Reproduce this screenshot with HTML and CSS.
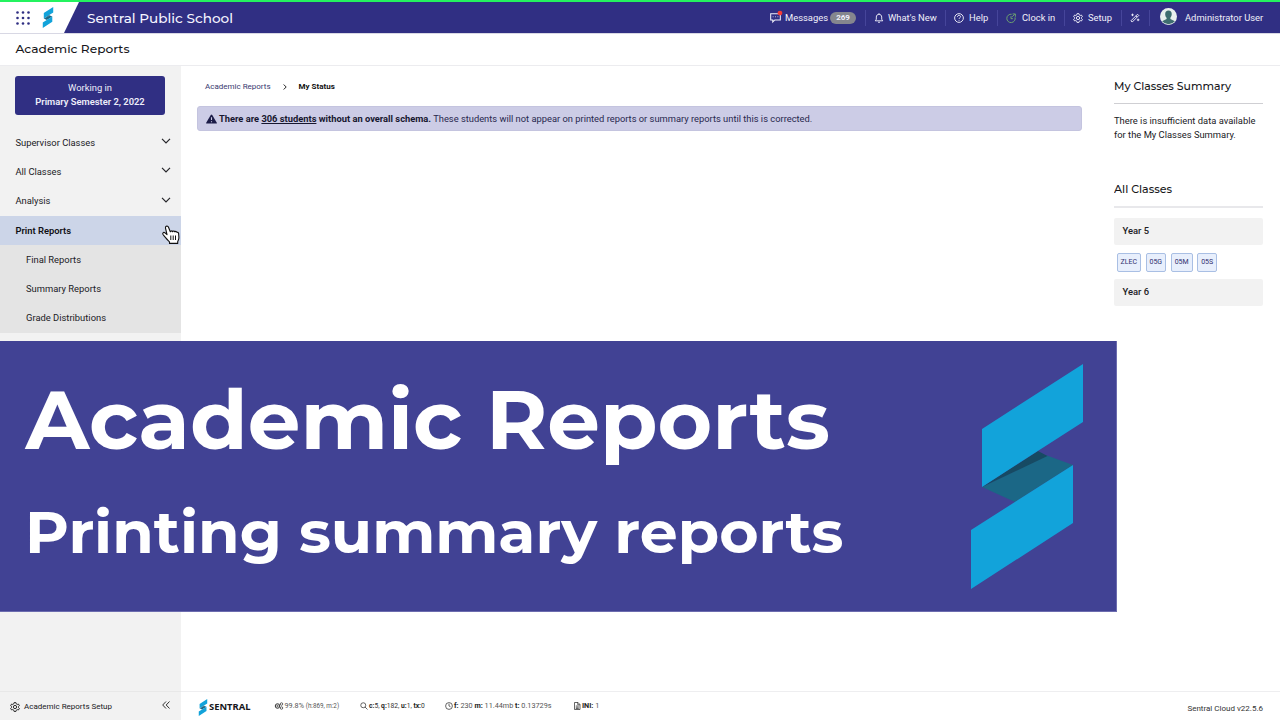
FILE: index.html
```html
<!DOCTYPE html>
<html lang="en">
<head>
<meta charset="utf-8">
<title>Academic Reports</title>
<link rel="stylesheet" href="styles.css">
</head>
<body>
<svg class="defs" width="0" height="0">
  <symbol id="logo" viewBox="0 0 112 225">
    <path fill="#1b6786" d="M11 123 76 91.500 102 101 44 138z"/>
    <path fill="#174a63" d="M11 123 67 87 76.500 92z"/>
    <path fill="#12a3da" d="M11 65 112 0V58L11 123zM0 166 102 101V159L0 225z"/>
  </symbol>
  <symbol id="gear" viewBox="0 0 16 16">
    <path d="M6.500 1h3l.5 2 1.500.9 2-.6L15 5.900l-1.500 1.400v1.500l1.500 1.400-1.500 2.600-2-.6-1.500.9-.5 2h-3L6 13l-1.500-.9-2 .6L1 10.100l1.500-1.400V7.200L1 5.900l1.500-2.600 2 .6L6 3z"/><circle cx="8" cy="8" r="2.600"/>
  </symbol>
  <symbol id="down" viewBox="0 0 10 6"><path d="M1 .8 5 4.800 9 .8"/></symbol>
</svg>
<div class="app">
  <header class="topbar">
    <div class="brand">
      <svg class="dots" viewBox="0 0 14 14"><g><circle cx="1.500" cy="1.500" r="1.300"/><circle cx="7" cy="1.500" r="1.300"/><circle cx="12.500" cy="1.500" r="1.300"/><circle cx="1.500" cy="7" r="1.300"/><circle cx="7" cy="7" r="1.300"/><circle cx="12.500" cy="7" r="1.300"/><circle cx="1.500" cy="12.500" r="1.300"/><circle cx="7" cy="12.500" r="1.300"/><circle cx="12.500" cy="12.500" r="1.300"/></g></svg>
      <svg class="brand-logo"><use href="#logo"/></svg>
    </div>
    <svg class="school" width="160" height="30"><text x="0" y="20.500" textLength="146" lengthAdjust="spacingAndGlyphs">Sentral Public School</text></svg>
    <nav class="topnav">
      <a class="messages"><svg class="ic" viewBox="0 0 16 16"><path d="M1 2.500h14v9H7l-3 3v-3H1zM4 7h1M7.500 7h1M11 7h1"/><circle class="red" cx="14.500" cy="1.500" r="3.500"/></svg><span>Messages</span><b>269</b></a>
      <a class="news"><svg class="ic" viewBox="0 0 16 16"><path d="M2 12.500h12L12.300 10V6.500C12.300 4 10.500 2 8 2S3.700 4 3.700 6.500V10zM6.500 14.800h3M8 .5V2"/></svg><span>What's New</span></a>
      <a class="help"><svg class="ic" viewBox="0 0 16 16"><circle cx="8" cy="8" r="7"/><path d="M5.500 6.200C5.500 3 10.500 3 10.500 6c0 1.500-2.500 2-2.500 3.500M8 11.300v1.200"/></svg><span>Help</span></a>
      <a class="clock"><svg class="ic green" viewBox="0 0 16 16"><path d="M14.500 7A6.700 6.700 0 1 1 9 2M8 5v4h3M10 6l4-4M10.500 1.500H15V6"/></svg><span>Clock in</span></a>
      <a class="setup"><svg class="ic"><use href="#gear"/></svg><span>Setup</span></a>
      <a class="wand"><svg class="ic" viewBox="0 0 16 16"><path d="M1.500 12.500 12 2l2 2L3.500 14.500zM9.500 4.500l2 2M4 1v4M2 3h4M13 9v4M11 11h4"/></svg></a>
      <a class="user"><svg class="avatar" viewBox="0 0 17 17"><circle cx="8.500" cy="8.500" r="8.500" fill="#e9f0ee"/><path fill="#3e6d70" d="M8.500 2.500c2.300 0 3.400 1.600 3.200 4-.1 1.500-.6 2.400-1.300 3.300v1.200l4.500 2.300a8.500 8.500 0 0 1-12.800 0L6.600 11V9.800C5.800 9 5.300 8 5.200 6.500 5 4.100 6.200 2.500 8.500 2.500z"/></svg><span>Administrator User</span></a>
    </nav>
  </header>
  <div class="titlebar"><svg width="140" height="30"><text x="0.500" y="19" textLength="114" lengthAdjust="spacingAndGlyphs">Academic Reports</text></svg></div>
  <div class="body">
    <aside class="side">
      <button class="working">Working in<strong>Primary Semester 2, 2022</strong></button>
      <a class="item"><span>Supervisor Classes</span><svg class="chev"><use href="#down"/></svg></a>
      <a class="item"><span>All Classes</span><svg class="chev"><use href="#down"/></svg></a>
      <a class="item"><span>Analysis</span><svg class="chev"><use href="#down"/></svg></a>
      <a class="item active"><span>Print Reports</span></a>
      <div class="sub"><a>Final Reports</a><a>Summary Reports</a><a>Grade Distributions</a></div>
      <div class="side-foot"><svg class="ic"><use href="#gear"/></svg><span>Academic Reports Setup</span><svg class="collapse" viewBox="0 0 8 8"><path d="M4 .5.700 4 4 7.500M7.500.5 4.200 4l3.300 3.500"/></svg></div>
    </aside>
    <div class="content">
      <div class="columns">
        <main class="main">
          <div class="crumbs"><a>Academic Reports</a><svg viewBox="0 0 4 6"><path d="M.7.500 3.200 3 .7 5.500"/></svg><b>My Status</b></div>
          <div class="alert"><svg viewBox="0 0 12 10"><path fill="#1c1c48" d="M6 0q.5 0 .8.500L11.800 9q.3 1-.6 1H.8Q-.1 10 .2 9L5.200.5Q5.500 0 6 0z"/><path stroke="#cccce6" stroke-width="1.200" d="M6 3v3.200M6 7.400v1.200"/></svg><p><b>There are <u>306 students</u> without an overall schema.</b> These students will not appear on printed reports or summary reports until this is corrected.</p></div>
        </main>
        <section class="right">
          <h2><svg width="149" height="20"><text x="0" y="13" textLength="117" lengthAdjust="spacingAndGlyphs">My Classes Summary</text></svg></h2>
          <p>There is insufficient data available<br>for the My Classes Summary.</p>
          <h2 class="second"><svg width="149" height="20"><text x="0" y="13" textLength="58" lengthAdjust="spacingAndGlyphs">All Classes</text></svg></h2>
          <div class="year">Year 5</div>
          <div class="chips"><a>ZLEC</a><a>05G</a><a>05M</a><a>05S</a></div>
          <div class="year">Year 6</div>
        </section>
      </div>
      <footer class="foot">
        <svg class="foot-logo"><use href="#logo"/></svg>
        <svg class="foot-name" width="44" height="16"><text x="0" y="11" textLength="41.500" lengthAdjust="spacingAndGlyphs">SENTRAL</text></svg>
        <span class="stat s1"><svg viewBox="0 0 18 16"><circle cx="6" cy="8" r="4.500" stroke-width="2"/><circle cx="6" cy="8" r="1.500"/><circle cx="14" cy="4" r="2.500"/><circle cx="14" cy="12" r="2.500"/></svg>99.8% <small>(h:869, m:2)</small></span>
        <span class="stat s2"><svg viewBox="0 0 16 16"><circle cx="6.500" cy="6.500" r="5"/><path d="m10 10 5 5"/></svg><b>c:</b>5, <b>q:</b>182, <b>u:</b>1, <b>tx:</b>0</span>
        <span class="stat s3"><svg viewBox="0 0 16 16"><circle cx="8" cy="8" r="6.800"/><path d="M8 3.500V8l3 1.500"/></svg><b>f:</b> 230 <b>m:</b> 11.44mb <b>t:</b> 0.13729s</span>
        <span class="stat s4"><svg viewBox="0 0 16 16"><path d="M3 1h7l4 4v10H3zM9.500 1v4.500H14M5.500 8h6M5.500 10.500h6M5.500 13h6"/></svg><b>INI:</b> 1</span>
        <span class="version">Sentral Cloud v22.5.6</span>
      </footer>
    </div>
  </div>
</div>
<svg class="hand" viewBox="0 0 18 20"><path fill="#fff" stroke="#111" stroke-width="1.100" stroke-linejoin="round" d="M4.700 1.300c1-.5 1.900 0 2.300.9l1.800 4.600c.3-1.100 1.800-1.200 2.300-.1.400-1 1.900-.9 2.300.2.500-.8 1.800-.6 2.100.5.700-.4 1.500.1 1.600 1l.3 3.900c.1 2-.7 3-1.200 4.300v1.800H8v-1.600C6.200 15.200 4 12.500 1.500 9.500c-.9-1.300.5-2.700 1.800-1.800l2.200 1.900L4 3.200q-.3-1.300.7-1.900z"/><path stroke="#111" fill="none" d="M9.300 10.500v4.500M11.700 10.500v4.500M14 10.500v4.500"/></svg>
<div class="banner">
  <svg class="banner-text" width="870" height="270"><text class="t1" x="25.500" y="107.500" textLength="804.500" lengthAdjust="spacingAndGlyphs">Academic Reports</text><text class="t2" x="25" y="212" textLength="818.500" lengthAdjust="spacingAndGlyphs">Printing summary reports</text></svg>
  <svg class="banner-logo"><use href="#logo"/></svg>
</div>
</body>
</html>
```
FILE: styles.css
```css
* { box-sizing: border-box; }
body { margin: 0; width: 1280px; height: 720px; overflow: hidden; position: relative; background: #fff; font: 9.4px/14px Roboto, sans-serif; color: #202024; }
svg { display: block; flex: none; fill: none; }
p, h2 { margin: 0; }
.defs { position: absolute; }
text { font-family: Montserrat, Inter, sans-serif; fill: #17171b; }
.app { display: flex; flex-direction: column; height: 720px; border-top: 2px solid #24f35f; }
.topbar { display: flex; height: 32px; background: #302f83; color: #f0f0fa; border-bottom: 1px solid #d8d8e4; flex: none; }
.brand { width: 79px; background: #fff; clip-path: polygon(0 0, 79px 0, 64px 31px, 0 31px); display: flex; align-items: flex-start; padding: 9px 0 0 16px; }
.dots { width: 14px; height: 14px; fill: #302f83; }
.brand-logo { width: 12px; height: 21px; margin: -4px 0 0 12px; }
.school { margin-left: 8px; }
.school text { font-size: 13.300px; font-weight: 550; fill: #f4f4ff; }
.topnav { display: flex; margin-left: auto; height: 31px; }
.topnav a { display: flex; align-items: center; position: relative; flex: none; }
.ic { width: 10px; height: 10px; stroke: currentColor; stroke-width: 1.500; overflow: visible; }
.topnav span { white-space: nowrap; }
.topnav a + a::before { content: ""; width: 1px; height: 16px; background: #46459a; margin-right: 8px; }
.red { fill: #f33b36; stroke: none; }
.green { stroke: #6fa86f; }
.messages { width: 95px; gap: 4px; }
.messages .ic { width: 11px; height: 11px; }
.topnav b { margin-left: -2px; width: 26px; height: 12px; border-radius: 6px; background: #85868e; font-size: 8px; line-height: 12px; text-align: center; }
.news { width: 80px; } .help { width: 52px; } .clock { width: 67px; } .setup { width: 57px; } .wand { width: 28px; } .user { width: 131px; }
.topnav .ic + span { margin-left: 5px; }
.messages .ic + span { margin-left: 0; }
.news .ic + span { margin-left: 4px; }
.clock .ic + span { margin-left: 6px; }
.avatar { width: 17px; height: 17px; margin: -2px 8px 0 2px; }
.titlebar { height: 32px; flex: none; border-bottom: 1px solid #ececef; padding-left: 15px; }
.titlebar text { font-size: 11.500px; font-weight: 550; }
.body { display: flex; flex: 1; min-height: 0; }
.side { width: 181px; background: #f2f2f2; display: flex; flex-direction: column; }
.working { display: block; margin: 10px 16px 13px 15px; height: 39px; background: #302f83; border: 0; border-radius: 3px; color: #eeeefa; font: 9.400px/14px Roboto, sans-serif; padding: 0 0 1px; flex: none; }
.working strong { display: block; font-weight: 600; }
.item { height: 29.300px; display: flex; align-items: center; justify-content: space-between; padding: 0 10px 0 15px; flex: none; }
.item span { margin-left: .4px; }
.chev { width: 10px; height: 6px; margin-top: -3px; stroke: #26262a; stroke-width: 1.200; }
.active { background: #ccd5e8; font-weight: 600; color: #101014; }
.sub { background: #e4e4e4; height: 88px; }
.sub a { display: flex; height: 29.300px; align-items: center; padding-left: 26px; }
.side-foot { margin-top: auto; height: 29px; border-top: 1px solid #e8e8e8; display: flex; align-items: center; padding: 1px 11px 0 10px; font-size: 8px; }
.side-foot span { margin-left: 4px; }
.side-foot .ic { color: #222; }
.collapse { width: 8px; height: 8px; stroke: #333; margin: -3px 0 0 auto; }
.content { flex: 1; display: flex; flex-direction: column; }
.columns { display: flex; flex: 1; }
.main { width: 901px; padding: 14px 0 0 16px; }
.crumbs { display: flex; align-items: center; padding-left: 8px; font-size: 8px; color: #39396f; }
.crumbs svg { width: 4px; height: 6px; stroke: #222; margin: 0 12px 0 12px; }
.crumbs b { color: #111; }
.alert { display: flex; align-items: center; height: 25px; margin-top: 12px; background: #cccce6; border: 1px solid #c4c4df; border-radius: 3px; padding-left: 8px; color: #28284e; font-size: 9.340px; }
.alert svg { width: 11px; height: 10px; margin-right: 2px; }
.alert b { color: #17172f; }
.right { width: 149px; margin-left: 32px; padding-top: 11px; }
.right h2 { height: 27px; border-bottom: 1px solid #cfcfd3; }
.right h2 text { font-size: 11px; font-weight: 550; }
.right p { margin-top: 10px; height: 28px; white-space: nowrap; }
.right .second { margin-top: 38px; height: 28px; border-bottom: 2px solid #e8e8eb; }
.year { height: 27px; margin-top: 10px; background: #f2f2f2; border-radius: 2px; padding-left: 8.500px; line-height: 26px; font-weight: 500; }
.chips { display: flex; gap: 4.500px; margin: 8px 0 -3px 2.500px; }
.chips a { height: 19px; border: 1px solid #a9bfe4; background: #e8effc; border-radius: 2px; font-size: 7px; line-height: 17px; padding: 0 3px; color: #30306f; }
.foot { height: 29px; border-top: 1px solid #eeeef0; display: flex; align-items: center; padding-left: 17px; font-size: 7.250px; color: #555; }
.foot-logo { width: 10px; height: 17px; margin-top: 3px; }
.foot-name { margin: 1px 0 0 1px; }
.foot-name text { font: 700 9.500px "Noto Sans", sans-serif; }
.stat { display: flex; align-items: center; white-space: pre; flex: none; }
.stat svg { width: 8px; height: 8px; stroke: #333; stroke-width: 1.500; margin-right: 1px; }
.stat small { font-size: 6.300px; }
.stat b { color: #222; }
.s1 { margin-left: 20.500px; width: 86.500px; } .s1 svg { width: 10px; } .s2 { width: 85px; font-size: 6.700px; color: #333; } .s3 { width: 128px; }
.version { margin: 5px 17px 0 auto; font-size: 8px; color: #333; }
.hand { position: absolute; left: 161px; top: 225px; width: 19px; height: 20px; }
.banner { position: absolute; left: 0; top: 341px; width: 1117px; height: 271px; background: #414294; border: solid #6c6caf; border-width: 0 1px 1px 0; }
.banner text { fill: #fff; }
.t1 { font-size: 82px; font-weight: 700; }
.t2 { font-size: 58px; font-weight: 700; }
.banner-logo { position: absolute; left: 971px; top: 23px; width: 112px; height: 225px; }
```
